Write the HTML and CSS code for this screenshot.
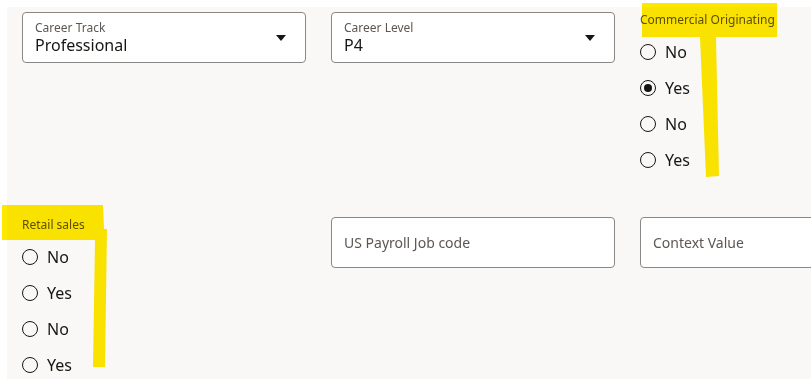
FILE: index.html
```html
<!DOCTYPE html>
<html lang="en">
<head>
    <meta charset="UTF-8">
    <title>Job Details</title>
    <link rel="stylesheet" href="styles.css">
</head>
<body>
    <div class="panel">
        <div class="form-grid">
            <div class="field select-field">
                <div class="field-text">
                    <div class="field-label">Career Track</div>
                    <div class="field-value">Professional</div>
                </div>
                <span class="caret"></span>
            </div>
            <div class="field select-field">
                <div class="field-text">
                    <div class="field-label">Career Level</div>
                    <div class="field-value">P4</div>
                </div>
                <span class="caret"></span>
            </div>
            <div class="radio-group">
                <div class="group-label">Commercial Originating</div>
                <label class="radio"><span class="dot"></span>No</label>
                <label class="radio"><span class="dot checked"></span>Yes</label>
                <label class="radio"><span class="dot"></span>No</label>
                <label class="radio"><span class="dot"></span>Yes</label>
            </div>

            <div class="radio-group">
                <div class="group-label">Retail sales</div>
                <label class="radio"><span class="dot"></span>No</label>
                <label class="radio"><span class="dot"></span>Yes</label>
                <label class="radio"><span class="dot"></span>No</label>
                <label class="radio"><span class="dot"></span>Yes</label>
            </div>
            <div class="field text-field">
                <span class="placeholder">US Payroll Job code</span>
            </div>
            <div class="field text-field">
                <span class="placeholder">Context Value</span>
            </div>
        </div>
    </div>

    <!-- marker highlights drawn over the screenshot -->
    <svg class="marker" width="811" height="381" viewBox="0 0 811 381">
        <path d="M642 3 L777 3 L777 37 L716 37 L719 176 L706 177 L700 37 L642 37 Z"/>
        <path d="M2 205 L103 205 L104 229 L107 229 L105 367 L93 367 L95 240 L2 240 Z"/>
    </svg>
</body>
</html>
```

FILE: styles.css
```css
body {
    margin: 0;
    background: #ffffff;
    font-family: 'Noto Sans', 'Open Sans', sans-serif;
    color: #161513;
}
.panel {
    margin: 7px 0 0 7px;
    padding: 5px 0 0 15px;
    height: 367px;
    background: #f9f8f6;
    overflow: hidden;
}
.form-grid {
    display: grid;
    grid-template-columns: 284px 284px 284px;
    column-gap: 25px;
    row-gap: 39px;
    align-items: start;
}
.field {
    box-sizing: border-box;
    height: 51px;
    background: #ffffff;
    border: 1px solid #8b8784;
    border-radius: 4px;
    display: flex;
    align-items: center;
    padding: 0 12px;
}
.select-field {
    justify-content: space-between;
    padding-right: 19px;
}
.field-label {
    font-size: 12px;
    line-height: 14px;
    margin-bottom: 2px;
    color: #5c5752;
}
.field-value {
    font-size: 16px;
    line-height: 17px;
    color: #161513;
}
.caret {
    width: 0;
    height: 0;
    border-left: 5.5px solid transparent;
    border-right: 5.5px solid transparent;
    border-top: 6px solid #161513;
}
.placeholder {
    font-size: 14px;
    color: #5c5752;
}
.group-label {
    font-size: 12px;
    line-height: 16px;
    color: #5c5752;
    margin-bottom: 6px;
}
.radio {
    display: flex;
    align-items: center;
    gap: 9px;
    height: 36px;
    font-size: 16px;
    color: #161513;
}
.dot {
    box-sizing: border-box;
    width: 16px;
    height: 16px;
    border: 1.5px solid #161513;
    border-radius: 50%;
    display: flex;
    align-items: center;
    justify-content: center;
}
.dot.checked::after {
    content: "";
    width: 8px;
    height: 8px;
    border-radius: 50%;
    background: #161513;
}
.marker {
    position: absolute;
    top: 0;
    left: 0;
    fill: #ffe800;
    mix-blend-mode: multiply;
    pointer-events: none;
}
```
